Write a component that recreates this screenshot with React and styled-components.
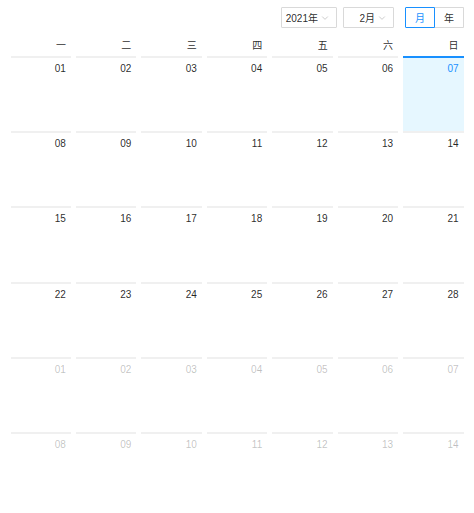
import React, { useState } from 'react';
import styled, { createGlobalStyle, css } from 'styled-components';

const GlobalStyle = createGlobalStyle`
  html, body {
    margin: 0;
    padding: 0;
    background: #fff;
  }
  body {
    font-family: "Liberation Sans", Arial, "Noto Sans CJK SC", sans-serif;
    color: rgba(0, 0, 0, 0.85);
  }
`;

const Calendar = styled.div`
  padding: 0 8px;
  box-sizing: border-box;
  width: 474px;
`;

const Header = styled.div`
  display: flex;
  justify-content: flex-end;
  align-items: center;
  padding: 7px 2px 7px 0;
`;

const Select = styled.div`
  box-sizing: border-box;
  display: flex;
  align-items: center;
  justify-content: flex-end;
  gap: 3px;
  width: ${p => p.width}px;
  height: 21px;
  padding: 0 7px;
  margin-left: 6px;
  border: 1px solid #d9d9d9;
  border-radius: 1px;
  font-size: 10px;
  white-space: nowrap;
  color: rgba(0, 0, 0, 0.85);
`;

const Arrow = styled.svg`
  width: 8px;
  height: 8px;
  flex: none;
`;

const RadioGroup = styled.div`
  display: flex;
  margin-left: 11px;
`;

const RadioButton = styled.div`
  box-sizing: border-box;
  display: flex;
  align-items: center;
  justify-content: center;
  width: 30px;
  height: 21px;
  font-size: 10px;
  border: 1px solid #d9d9d9;
  background: #fff;
  color: rgba(0, 0, 0, 0.85);
  cursor: pointer;
  &:first-child {
    border-radius: 1px 0 0 1px;
  }
  &:last-child {
    border-left: none;
    width: 29px;
    border-radius: 0 1px 1px 0;
  }
  ${p => p.active && css`
    border-color: #1890ff;
    color: #1890ff;
  `}
`;

const Grid = styled.div`
  display: grid;
  grid-template-columns: repeat(7, 1fr);
`;

const WeekDay = styled.div`
  box-sizing: border-box;
  height: 20.5px;
  padding: 3px 7.5px 0 0;
  line-height: 16px;
  text-align: right;
  font-size: 10px;
  color: rgba(0, 0, 0, 0.85);
`;

const Cell = styled.div`
  box-sizing: border-box;
  height: 75.4px;
  margin: 0 2.5px;
  padding: 3px 5px 0;
  border-top: 2px solid #f0f0f0;
  text-align: right;
  font-size: 10px;
  line-height: 15px;
  color: ${p => (p.outside ? 'rgba(0, 0, 0, 0.25)' : 'rgba(0, 0, 0, 0.85)')};
  ${p => p.today && css`
    background: #e6f7ff;
    border-top-color: #1890ff;
    color: #1890ff;
  `}
`;

const weekDays = ['一', '二', '三', '四', '五', '六', '日'];

// Feb 2021 starts on a Monday and has 28 days, the last two rows spill into March
const days = [];
for (let d = 1; d <= 28; d++) days.push({ n: d, outside: false });
for (let d = 1; d <= 14; d++) days.push({ n: d, outside: true });

const pad = n => String(n).padStart(2, '0');

function Chevron() {
  return (
    <Arrow viewBox="0 0 10 10">
      <path d="M1.5 3.2 L5 6.7 L8.5 3.2" fill="none" stroke="#bfbfbf" strokeWidth="1" />
    </Arrow>
  );
}

export default function App() {
  const [mode, setMode] = useState('month');
  return (
    <Calendar>
      <GlobalStyle />
      <Header>
        <Select width={56}>
          <span>2021年</span>
          <Chevron />
        </Select>
        <Select width={51}>
          <span>2月</span>
          <Chevron />
        </Select>
        <RadioGroup>
          <RadioButton active={mode === 'month'} onClick={() => setMode('month')}>月</RadioButton>
          <RadioButton active={mode === 'year'} onClick={() => setMode('year')}>年</RadioButton>
        </RadioGroup>
      </Header>
      <Grid>
        {weekDays.map(w => (
          <WeekDay key={w}>{w}</WeekDay>
        ))}
        {days.map((d, i) => (
          <Cell key={i} outside={d.outside} today={!d.outside && d.n === 7}>
            {pad(d.n)}
          </Cell>
        ))}
      </Grid>
    </Calendar>
  );
}
